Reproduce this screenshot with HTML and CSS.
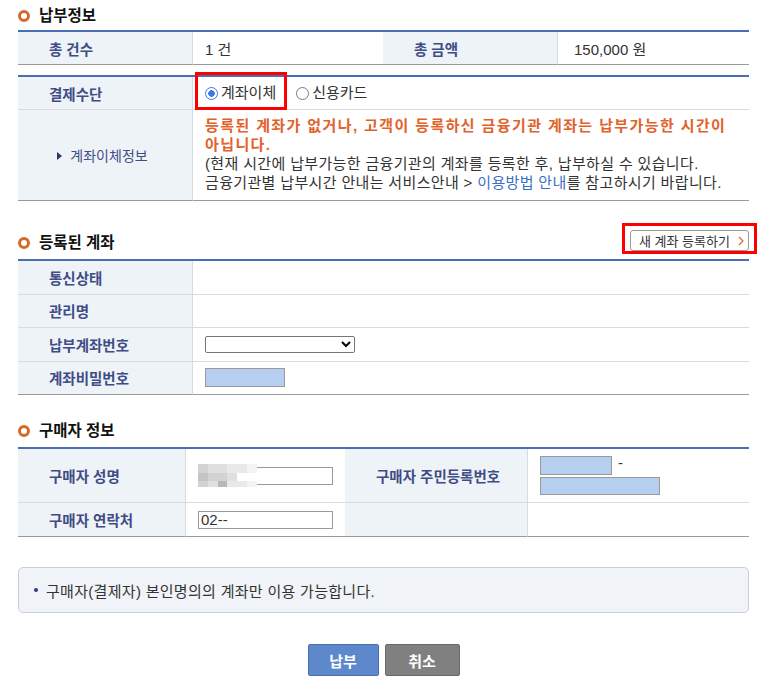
FILE: index.html
```html
<!DOCTYPE html>
<html lang="ko">
<head>
<meta charset="utf-8">
<title>납부정보</title>
<link rel="stylesheet" href="styles.css">
</head>
<body>
<div class="page">
  <div class="sec-head first">
    <h2 class="sec-title"><span class="dot"></span>납부정보</h2>
  </div>
  <table class="tbl t1">
    <colgroup><col class="w175"><col class="w190"><col class="w175"><col></colgroup>
    <tr>
      <th>총 건수</th><td>1 건</td>
      <th>총 금액</th><td class="amt">150,000 원</td>
    </tr>
  </table>

  <table class="tbl t2">
    <colgroup><col class="w175"><col></colgroup>
    <tr class="r33">
      <th>결제수단</th>
      <td>
        <div class="opts">
          <label class="opt hl"><input class="radio" type="radio" name="pay" checked>계좌이체</label>
          <label class="opt"><input class="radio" type="radio" name="pay">신용카드</label>
        </div>
      </td>
    </tr>
    <tr>
      <th class="th-sub"><span class="tri"></span>계좌이체정보</th>
      <td class="info">
        <p class="warn">등록된 계좌가 없거나, 고객이 등록하신 금융기관 계좌는 납부가능한 시간이 아닙니다.</p>
        <p>(현재 시간에 납부가능한 금융기관의 계좌를 등록한 후, 납부하실 수 있습니다.</p>
        <p>금융기관별 납부시간 안내는 서비스안내 &gt; <span class="link">이용방법 안내</span>를 참고하시기 바랍니다.</p>
      </td>
    </tr>
  </table>

  <div class="sec-head second">
    <h2 class="sec-title"><span class="dot"></span>등록된 계좌</h2>
    <button class="btn-reg" type="button">새 계좌 등록하기<svg class="chev" width="6" height="10" viewBox="0 0 6 10"><polyline points="1,1 5,5 1,9" fill="none" stroke="#e0642c" stroke-width="1.2"/></svg></button>
  </div>
  <table class="tbl t3">
    <colgroup><col class="w175"><col></colgroup>
    <tr><th>통신상태</th><td></td></tr>
    <tr><th>관리명</th><td></td></tr>
    <tr><th>납부계좌번호</th><td><select class="sel"><option></option></select></td></tr>
    <tr><th>계좌비밀번호</th><td><input class="pw" type="password"></td></tr>
  </table>

  <div class="sec-head">
    <h2 class="sec-title"><span class="dot"></span>구매자 정보</h2>
  </div>
  <table class="tbl t4">
    <colgroup><col class="w168"><col class="w159"><col class="w183"><col></colgroup>
    <tr class="r54">
      <th>구매자 성명</th>
      <td>
        <span class="namebox">
          <input class="txt" type="text">
          <span class="mosaic">
            <i class="g3"></i><i class="g2"></i><i class="g2"></i><i class="g1"></i><i class="g1"></i><i class="g0"></i>
            <i class="g4"></i><i class="g3"></i><i class="g3"></i><i class="g2"></i><i class="gw"></i><i class="gw"></i>
            <i class="g3"></i><i class="g2"></i><i class="g5"></i><i class="g1"></i><i class="g1"></i><i class="g0"></i>
          </span>
        </span>
      </td>
      <th>구매자 주민등록번호</th>
      <td>
        <div class="jumin">
          <div class="jrow"><input class="jin j1" type="text"><span class="dash">-</span></div>
          <input class="jin j2" type="password">
        </div>
      </td>
    </tr>
    <tr>
      <th>구매자 연락처</th>
      <td><input class="txt" type="text" value="02--"></td>
      <th></th>
      <td></td>
    </tr>
  </table>

  <div class="notice"><span class="bullet"></span>구매자(결제자) 본인명의의 계좌만 이용 가능합니다.</div>

  <div class="actions">
    <button class="btn btn-pay" type="button">납부</button>
    <button class="btn btn-cancel" type="button">취소</button>
  </div>
</div>
</body>
</html>
```
FILE: styles.css
```css
* { box-sizing: border-box; }
body {
  margin: 0;
  background: #fff;
  color: #333;
  font-family: "Liberation Sans", "Noto Sans CJK KR", sans-serif;
  font-size: 15px;
}
p { margin: 0; }
.page { width: 731px; margin-left: 18px; }

/* section headers */
.sec-head {
  height: 33px;
  display: flex;
  align-items: center;
  justify-content: space-between;
}
.sec-head.first { height: 30px; padding-top: 2px; margin-top: 0; }
.sec-head.second { margin-top: 25px; }
.t3 + .sec-head { margin-top: 19px; }
.sec-title {
  margin: 0;
  display: flex;
  align-items: center;
  gap: 9px;
  font-size: 15.5px;
  font-weight: bold;
  color: #111;
  line-height: 20px;
}
.dot {
  width: 12px;
  height: 12px;
  border-radius: 50%;
  border: 3.5px solid #d4692c;
  background: #fff;
}

/* tables */
.tbl {
  width: 731px;
  border-collapse: separate;
  border-spacing: 0;
  table-layout: fixed;
  border-top: 2px solid #4b6db4;
}
.w175 { width: 175px; }
.w190 { width: 190px; }
.w168 { width: 168px; }
.w159 { width: 159px; }
.w183 { width: 183px; }
.tbl th, .tbl td {
  height: 33px;
  padding: 0 12px;
  border-bottom: 1px solid #dadada;
  vertical-align: middle;
  font-size: 15px;
  font-weight: normal;
  color: #333;
}
.tbl td.amt { padding-left: 16px; }
.tbl tr:last-child > th, .tbl tr:last-child > td { border-bottom-color: #9a9a9a; }
.tbl th {
  background: #eef3f8;
  color: #3f4c85;
  font-weight: bold;
  font-size: 14.5px;
  text-align: left;
  padding-left: 31px;
  padding-right: 4px;
  border-right: 1px solid #d6dbe1;
}
.t2 { margin-top: 10px; }
.t3 th, .t3 td { height: 33.5px; }
.t4 .r54 th, .t4 .r54 td { height: 54px; }
.t4 tr:last-child th, .t4 tr:last-child td { height: 34px; }

.tbl .th-sub {
  text-align: center;
  padding-left: 0;
  padding-right: 5px;
  font-weight: normal;
  font-size: 14px;
}
.tri {
  display: inline-block;
  width: 0;
  height: 0;
  border-left: 5px solid #2b3766;
  border-top: 4px solid transparent;
  border-bottom: 4px solid transparent;
  margin-right: 8px;
  vertical-align: 1px;
}

/* payment options */
.opts { display: flex; align-items: center; gap: 20px; }
.opt {
  display: inline-flex;
  align-items: center;
  height: 20px;
  line-height: 20px;
  font-size: 15px;
  color: #333;
}
.radio {
  appearance: none;
  -webkit-appearance: none;
  width: 13px;
  height: 13px;
  margin: 0 3px 0 0;
  border: 1px solid #7a7a7a;
  border-radius: 50%;
  background: #fff;
}
.radio:checked {
  border-color: #3f76e8;
  background: radial-gradient(circle, #3f76e8 0 3px, #fff 3.6px);
}
.hl { position: relative; }
.hl::after {
  content: "";
  position: absolute;
  left: -10px;
  right: -11px;
  top: -11px;
  bottom: -7px;
  border: 3px solid #f00;
}

.tbl td.info {
  height: 91px;
  padding: 6px 12px 8px;
  line-height: 19px;
  letter-spacing: 0.35px;
}
.warn { color: #e2622b; font-weight: bold; letter-spacing: 1.4px; }
.link { color: #3a6fc9; }

/* register button */
.btn-reg {
  position: relative;
  align-self: flex-start;
  margin-top: 4px;
  width: 119px;
  height: 21px;
  padding: 0 0 0 8px;
  display: inline-flex;
  align-items: center;
  border: 1px solid #9a9a9a;
  border-radius: 3px;
  background: #fff;
  font-family: inherit;
  font-size: 13px;
  color: #333;
  white-space: nowrap;
}
.chev { margin-left: 8px; }
.btn-reg::after {
  content: "";
  position: absolute;
  left: -9px;
  right: -9px;
  top: -8px;
  bottom: -4px;
  border: 3px solid #f00;
}

/* inputs */
.sel {
  width: 150px;
  height: 17px;
  border: 1px solid #767676;
  border-radius: 2px;
  background: #fff;
  font-size: 12px;
  padding: 0;
  display: block;
}
.pw {
  display: block;
  width: 80px;
  height: 19px;
  border: 1px solid #9a9a9a;
  background: #b6cff0;
}
.txt {
  display: block;
  width: 135px;
  height: 18px;
  border: 1px solid #9a9a9a;
  padding: 0 2px;
  font-family: inherit;
  font-size: 15px;
  color: #333;
  background: #fff;
}
.namebox { position: relative; display: block; width: 135px; }
.mosaic {
  position: absolute;
  left: 0;
  top: -3px;
  width: 59px;
  height: 23px;
  display: grid;
  grid-template-columns: repeat(6, 1fr);
  grid-template-rows: 9px 8px 6px;
}
.mosaic i { display: block; }
.g0 { background: #f3f3f3; }
.g1 { background: #e9e9e9; }
.g2 { background: #dfdfdf; }
.g3 { background: #d2d2d2; }
.g4 { background: #c4c4c4; }
.g5 { background: #b9b9b9; }
.gw { background: #fff; }

.jumin { display: flex; flex-direction: column; gap: 2px; }
.jrow { display: flex; align-items: center; }
.jin {
  display: block;
  border: 1px solid #9a9a9a;
  background: #b6cff0;
}
.j1 { width: 72px; height: 19px; }
.j2 { width: 120px; height: 18px; }
.dash { margin-left: 6px; margin-top: -5px; font-size: 15px; color: #333; line-height: 14px; }

/* notice */
.notice {
  margin-top: 30px;
  height: 46px;
  display: flex;
  align-items: center;
  padding-left: 15px;
  border: 1px solid #c8cfd9;
  border-radius: 5px;
  background: #f0f3f8;
  font-size: 15px;
  letter-spacing: 0.3px;
  color: #333;
}
.bullet {
  width: 4px;
  height: 4px;
  border-radius: 50%;
  background: #2c3a8c;
  margin-right: 8px;
}

/* action buttons */
.actions {
  margin-top: 31px;
  display: flex;
  justify-content: center;
  gap: 6px;
}
.btn {
  height: 32px;
  border: 1px solid;
  border-radius: 2px;
  color: #fff;
  font-family: inherit;
  font-weight: bold;
  font-size: 15px;
  padding: 0;
}
.btn-pay { width: 71px; background: #5d88cb; border-color: #4a70b2; }
.btn-cancel { width: 75px; background: #808080; border-color: #6a6a6a; }
```
